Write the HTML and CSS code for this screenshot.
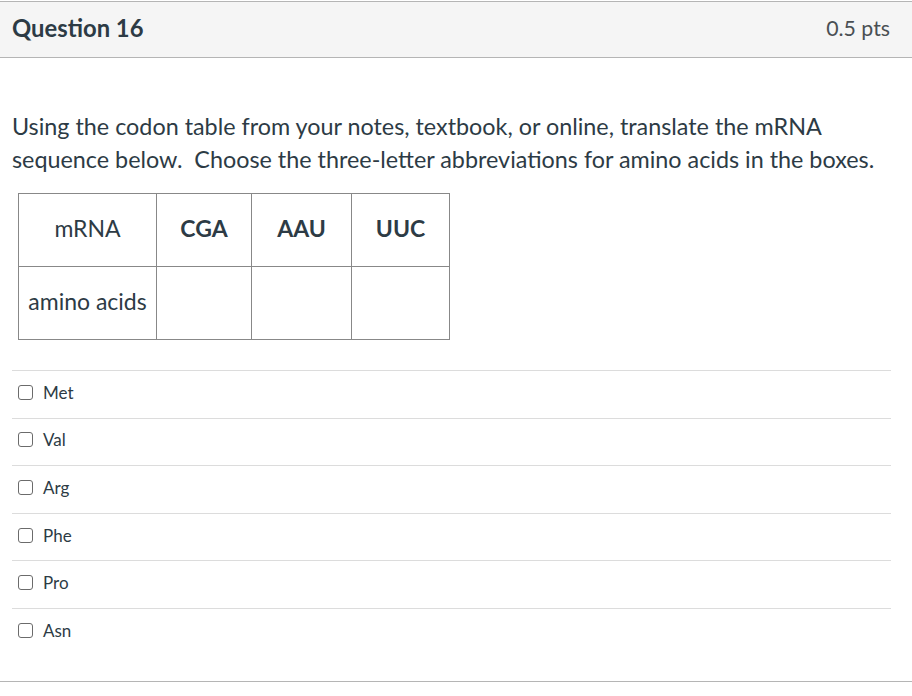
FILE: index.html
```html
<!DOCTYPE html>
<html lang="en">
<head>
<meta charset="utf-8">
<title>Question 16</title>
<link rel="stylesheet" href="styles.css">
</head>
<body>
<div class="question">
  <div class="q-header">
    <span class="q-title">Question 16</span>
    <span class="q-points">0.5 pts</span>
  </div>
  <div class="q-body">
    <p class="q-text">Using the codon table from your notes, textbook, or online, translate the mRNA sequence below.&nbsp; Choose the three-letter abbreviations for amino acids in the boxes.</p>
    <table class="codon">
      <tr>
        <td class="c1">mRNA</td>
        <td class="c2 b">CGA</td>
        <td class="c3 b">AAU</td>
        <td class="c4 b">UUC</td>
      </tr>
      <tr>
        <td class="c1">amino acids</td>
        <td></td>
        <td></td>
        <td></td>
      </tr>
    </table>
    <div class="answers">
      <label class="answer"><span class="box"></span><span class="lbl">Met</span></label>
      <label class="answer"><span class="box"></span><span class="lbl">Val</span></label>
      <label class="answer"><span class="box"></span><span class="lbl">Arg</span></label>
      <label class="answer"><span class="box"></span><span class="lbl">Phe</span></label>
      <label class="answer"><span class="box"></span><span class="lbl">Pro</span></label>
      <label class="answer"><span class="box"></span><span class="lbl">Asn</span></label>
    </div>
  </div>
</div>
</body>
</html>
```
FILE: styles.css
```css
html, body {
  margin: 0;
  padding: 0;
  background: #fff;
}
body {
  font-family: Lato, "Open Sans", "Liberation Sans", sans-serif;
  color: #2d3b45;
}
.question {
  margin-top: 1px;
  border-top: 1px solid #b5b5b5;
  border-bottom: 1px solid #b5b5b5;
  height: 681px;
  box-sizing: border-box;
}
.q-header {
  display: flex;
  align-items: center;
  justify-content: space-between;
  height: 56px;
  box-sizing: border-box;
  padding: 0 22px 4px 12px;
  background: #f5f5f5;
  border-bottom: 1px solid #b5b5b5;
}
.q-title {
  font-size: 23.8px;
  font-weight: 700;
  color: #2d3b45;
}
.q-points {
  font-size: 21.3px;
  font-weight: 400;
  color: #4a4f53;
}
.q-body {
  padding: 0 21px 0 12px;
}
.q-text {
  margin: 52px 0 17px;
  font-size: 23.35px;
  line-height: 33px;
}
.codon {
  border-collapse: collapse;
  margin-left: 6px;
  border: 1px solid #333;
  font-size: 23px;
}
.codon td {
  border: 1px solid #888;
  height: 68px;
  text-align: center;
  padding: 0 0 4px;
}
.codon .c1 { width: 137px; }
.codon .c2 { width: 94px; }
.codon .c3 { width: 99px; }
.codon .c4 { width: 97px; }
.codon .b { font-weight: 700; }
.answers {
  margin-top: 30px;
}
.answer {
  display: flex;
  align-items: center;
  height: 47.6px;
  box-sizing: border-box;
  border-top: 1px solid #dcdcdc;
  padding: 0 0 4px 6px;
}
.box {
  width: 13px;
  height: 13px;
  border: 1px solid #6b6b6b;
  border-radius: 3px;
  margin-right: 10px;
  flex: none;
}
.lbl {
  font-size: 17px;
  color: #2d3b45;
}
```
